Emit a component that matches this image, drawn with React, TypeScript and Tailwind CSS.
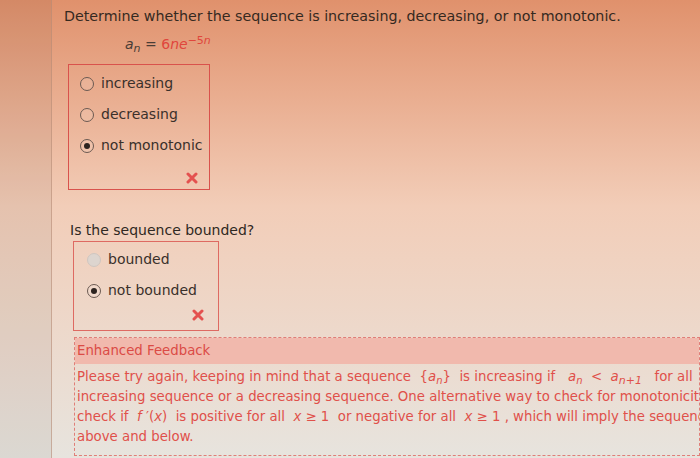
import React from 'react';

const FONT = { fontFamily: '"DejaVu Sans", Verdana, sans-serif' };

function Radio({ checked = false, faded = false }: { checked?: boolean; faded?: boolean }) {
  if (faded) {
    return <span className="inline-block h-[14px] w-[14px] shrink-0 rounded-full border border-[#cfc6c0] bg-[#ddd5cf]" />;
  }
  return (
    <span className="inline-flex h-[14px] w-[14px] shrink-0 items-center justify-center rounded-full border-[1.5px] border-[#6b5a52] bg-white/10">
      {checked && <span className="h-[6px] w-[6px] rounded-full bg-[#2d2420]" />}
    </span>
  );
}

function RedX() {
  return (
    <svg width="12" height="12" viewBox="0 0 12 12" className="block">
      <path d="M2 2 L10 10 M10 2 L2 10" stroke="#e4514f" strokeWidth="3" strokeLinecap="round" />
    </svg>
  );
}

function Option({ label, checked, faded }: { label: string; checked?: boolean; faded?: boolean }) {
  return (
    <div className="flex h-[31px] items-center gap-[7px] whitespace-nowrap">
      <Radio checked={checked} faded={faded} />
      <span>{label}</span>
    </div>
  );
}

// italic math letters
const I = ({ children }: { children: React.ReactNode }) => <span className="italic">{children}</span>;

export default function App() {
  return (
    <div
      className="flex h-[458px] w-[700px] overflow-hidden bg-linear-to-b from-[#e0916c] via-[#f2cdb8] via-45% to-[#e7e4de] text-[14px] text-[#3a302b]"
      style={FONT}
    >
      {/* left gutter */}
      <div className="w-[52px] shrink-0 border-r border-[#b98d78]/60 bg-black/[0.05]" />

      <div className="min-w-0 flex-1 pl-3 pt-[6px]">
        <div className="h-[20px] whitespace-nowrap text-[14.25px] leading-[20px] text-[#35291f]">
          Determine whether the sequence is increasing, decreasing, or not monotonic.
        </div>

        {/* formula */}
        <div className="ml-[61px] mt-[8px] h-[20px] leading-[20px] text-[#4a3d36]">
          <I>a</I>
          <sub className="text-[11px] italic">n</sub>
          <span> = </span>
          <span className="text-[#e0463c]">
            6<I>ne</I>
            <sup className="text-[11px]">
              −5<I>n</I>
            </sup>
          </span>
        </div>

        {/* monotonic choices */}
        <div className="ml-1 mt-[10px] w-[142px] border border-[#d9524c] pl-[11px] pr-[6px] pt-[3px] pb-[5px]">
          <Option label="increasing" />
          <Option label="decreasing" />
          <Option label="not monotonic" checked />
          <div className="mt-[11px] flex justify-end pr-[5px]">
            <RedX />
          </div>
        </div>

        <div className="ml-[6px] mt-[30px] h-[20px] leading-[20px] text-[#2f2822]">Is the sequence bounded?</div>

        {/* bounded choices */}
        <div className="ml-[9px] mt-[1px] w-[146px] border border-[#de6a62] px-[13px] pt-[2px] pb-[9px]">
          <Option label="bounded" faded />
          <Option label="not bounded" checked />
          <div className="mt-[3px] flex justify-end pr-[1px]">
            <RedX />
          </div>
        </div>

        {/* feedback */}
        <div className="ml-[10px] mt-[6px] border border-dashed border-[#e07e78] text-[13.3px] text-[#e0504a]">
          <div className="flex h-[26px] items-center bg-[#f1b9ad] px-[2px] text-[#db4b45]">Enhanced Feedback</div>
          <div className="overflow-hidden whitespace-nowrap px-[2px] pb-[8px] pt-[3px] leading-[20px]">
            <div>
              Please try again, keeping in mind that a sequence&nbsp;&nbsp;{'{'}
              <I>a</I>
              <sub className="text-[10px] italic">n</sub>
              {'}'}&nbsp;&nbsp;is increasing if&nbsp;&nbsp;&nbsp;<I>a</I>
              <sub className="text-[10px] italic">n</sub>&nbsp;&nbsp;&lt;&nbsp;&nbsp;<I>a</I>
              <sub className="text-[11px] italic">n+1</sub>&nbsp;&nbsp;&nbsp;for all&nbsp;&nbsp;<I>n</I> ≥ 1.
            </div>
            <div>increasing sequence or a decreasing sequence. One alternative way to check for monotonicity is to</div>
            <div>
              check if&nbsp;&nbsp;<I>f</I> ′(<I>x</I>)&nbsp;&nbsp;is positive for all&nbsp;&nbsp;<I>x</I> ≥ 1&nbsp;&nbsp;or negative for all&nbsp;&nbsp;
              <I>x</I> ≥ 1 , which will imply the sequence is monotonic.
            </div>
            <div>above and below.</div>
          </div>
        </div>
      </div>
    </div>
  );
}
